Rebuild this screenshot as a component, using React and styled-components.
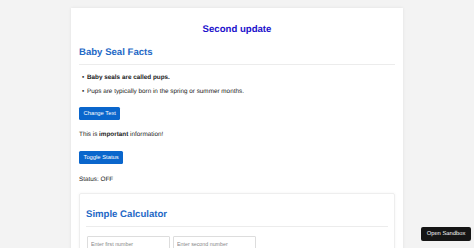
import React from "react";
import styled, { createGlobalStyle } from "styled-components";

const GlobalStyle = createGlobalStyle`
  html, body {
    margin: 0;
    padding: 0;
    overflow: hidden;
    background: #f3f3f3;
    font-family: "Liberation Sans", Arial, sans-serif;
    color: #222;
    text-rendering: geometricPrecision;
  }
`;

const Page = styled.div`
  padding-top: 8px;
  display: flex;
  justify-content: center;
`;

const Card = styled.div`
  width: 332px;
  box-sizing: border-box;
  background: #fff;
  padding: 8px 8px 20px;
  box-shadow: 0 0 3px rgba(0, 0, 0, 0.08);
`;

const Title = styled.h1`
  margin: 7.5px 0 0;
  font-size: 9.6px;
  line-height: 11px;
  text-align: center;
  color: #2211cc;
`;

const Heading = styled.h2`
  margin: ${({ top }) => top || "12px"} 0 0;
  padding-bottom: 6px;
  border-bottom: 1px solid #ececec;
  font-size: 9.6px;
  line-height: 11px;
  color: #1f69c6;
`;

const List = styled.ul`
  margin: 7px 0 0;
  padding-left: 3px;
  list-style: none;
  font-size: 6.35px;
  line-height: 11px;
`;

const Item = styled.li`
  display: flex;
  font-weight: ${({ bold }) => (bold ? 700 : 400)};
  & + & {
    margin-top: 3px;
  }
  &::before {
    content: "•";
    width: 5px;
    font-weight: 400;
  }
`;

const Button = styled.button`
  display: block;
  margin-top: ${({ top }) => top || "10.5px"};
  height: 13px;
  padding: 0 4.5px;
  border: none;
  border-radius: 1.5px;
  background: #0a66cc;
  color: #fff;
  font-family: "Liberation Sans", Arial, sans-serif;
  font-size: 5.8px;
  cursor: pointer;
`;

const Text = styled.p`
  margin: ${({ top }) => top || "10.5px"} 0 0;
  font-size: 6.35px;
  line-height: 11px;
`;

const Calculator = styled.div`
  margin-top: 7.5px;
  padding: 7px 6px 12px;
  border: 1px solid #eee;
  border-radius: 2px;
  box-shadow: 0 0 3px rgba(0, 0, 0, 0.05);
`;

const Inputs = styled.div`
  display: flex;
  gap: 3px;
  margin-top: 9px;
  padding-left: 1px;
`;

const Input = styled.input`
  width: 83px;
  height: 16px;
  box-sizing: border-box;
  padding: 0 3px;
  border: 1px solid #ddd;
  border-radius: 1px;
  font-family: "Liberation Sans", Arial, sans-serif;
  font-size: 5.3px;
  color: #333;
  &::placeholder {
    color: #888;
  }
`;

const SandboxButton = styled.div`
  position: fixed;
  right: 3px;
  bottom: 7px;
  width: 50px;
  height: 14px;
  display: flex;
  align-items: center;
  justify-content: center;
  background: #151515;
  border-radius: 2px;
  color: #fff;
  font-size: 5.8px;
`;

const App = () => {
  return (
    <>
      <GlobalStyle />
      <Page>
        <Card>
          <Title>Second update</Title>
          <Heading>Baby Seal Facts</Heading>
          <List>
            <Item bold>Baby seals are called pups.</Item>
            <Item>Pups are typically born in the spring or summer months.</Item>
          </List>
          <Button top="10px">Change Text</Button>
          <Text top="9.5px">
            This is <strong>important</strong> information!
          </Text>
          <Button>Toggle Status</Button>
          <Text>Status: OFF</Text>
          <Calculator>
            <Heading top="8.5px">Simple Calculator</Heading>
            <Inputs>
              <Input placeholder="Enter first number" />
              <Input placeholder="Enter second number" />
            </Inputs>
          </Calculator>
        </Card>
      </Page>
      <SandboxButton>Open Sandbox</SandboxButton>
    </>
  );
};

export default App;
